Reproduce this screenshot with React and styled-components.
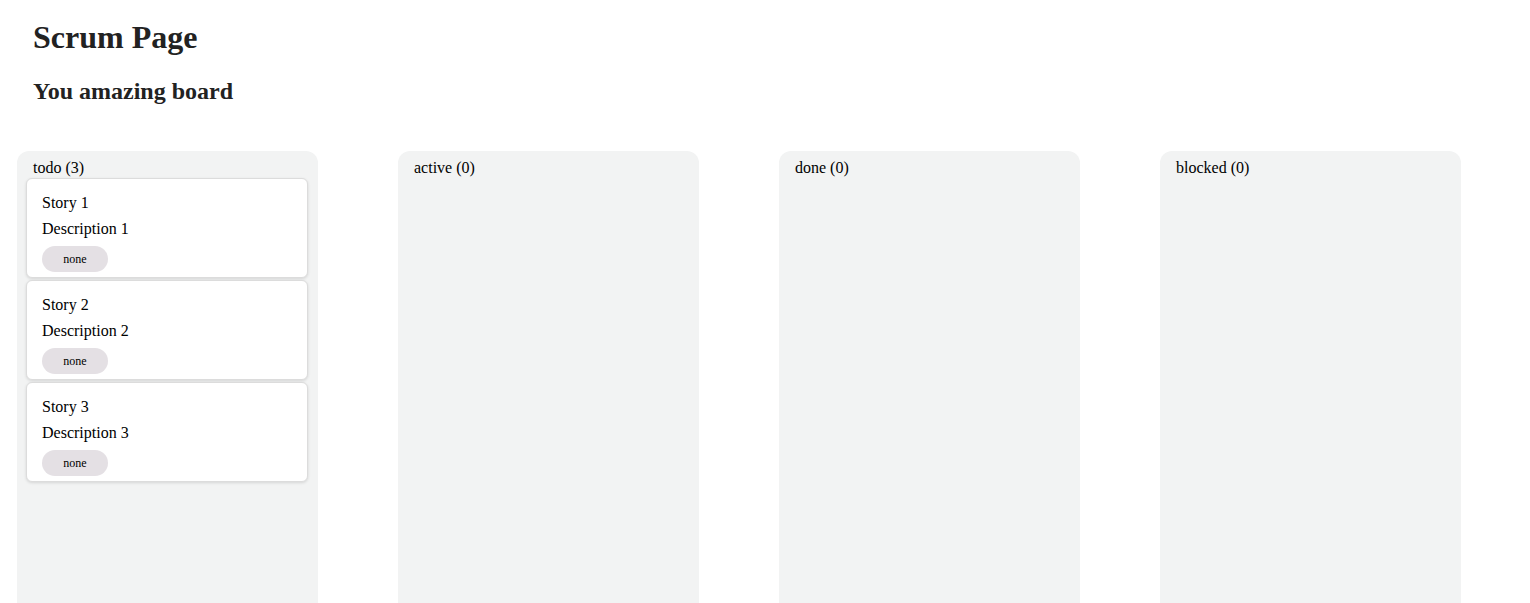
import React from "react";
import styled, { createGlobalStyle } from "styled-components";

const Global = createGlobalStyle`
  body {
    margin: 0;
    background: #ffffff;
    font-family: "Liberation Serif", "Times New Roman", serif;
    color: #000;
  }
`;

const Page = styled.div`
  padding: 0 8px;
`;

const Header = styled.header`
  padding: 1px 25px 0;
  color: #222222;
`;

const Title = styled.h1`
  font-size: 32px;
  font-weight: bold;
  margin: 18px 0 22px;
`;

const Subtitle = styled.h2`
  font-size: 24px;
  font-weight: bold;
  margin: 0;
`;

const Board = styled.main`
  display: flex;
  gap: 80px;
  margin: 46px 0 0 9px;
`;

const Column = styled.section`
  flex: 0 0 301px;
  box-sizing: border-box;
  min-height: 600px;
  background: #f2f3f3;
  border-radius: 12px;
  padding: 8px 10px 8px 9px;
  display: flex;
  flex-direction: column;
  gap: 2px;
`;

const ColumnTitle = styled.div`
  font-size: 16px;
  line-height: 18px;
  padding-left: 7px;
  margin-bottom: -1px;
`;

const Card = styled.article`
  background: #fff;
  border: 1px solid #dcdcdc;
  border-radius: 6px;
  box-shadow: 0 1px 3px rgba(0, 0, 0, 0.12);
  padding: 15px 15px 5px;
  display: flex;
  flex-direction: column;
  align-items: flex-start;
  gap: 8px;
`;

const Line = styled.div`
  font-size: 16px;
  line-height: 18px;
`;

const Tag = styled.span`
  display: inline-flex;
  align-items: center;
  justify-content: center;
  width: 66px;
  height: 26px;
  border-radius: 13px;
  background: #e4e0e4;
  font-size: 12px;
`;

const columns = [
  {
    name: "todo",
    items: [
      { title: "Story 1", desc: "Description 1", tag: "none" },
      { title: "Story 2", desc: "Description 2", tag: "none" },
      { title: "Story 3", desc: "Description 3", tag: "none" },
    ],
  },
  { name: "active", items: [] },
  { name: "done", items: [] },
  { name: "blocked", items: [] },
];

export default function App() {
  return (
    <Page>
      <Global />
      <Header>
        <Title>Scrum Page</Title>
        <Subtitle>You amazing board</Subtitle>
      </Header>
      <Board>
        {columns.map((c) => (
          <Column key={c.name}>
            <ColumnTitle>
              {c.name} ({c.items.length})
            </ColumnTitle>
            {c.items.map((it) => (
              <Card key={it.title}>
                <Line>{it.title}</Line>
                <Line>{it.desc}</Line>
                <Tag>{it.tag}</Tag>
              </Card>
            ))}
          </Column>
        ))}
      </Board>
    </Page>
  );
}
